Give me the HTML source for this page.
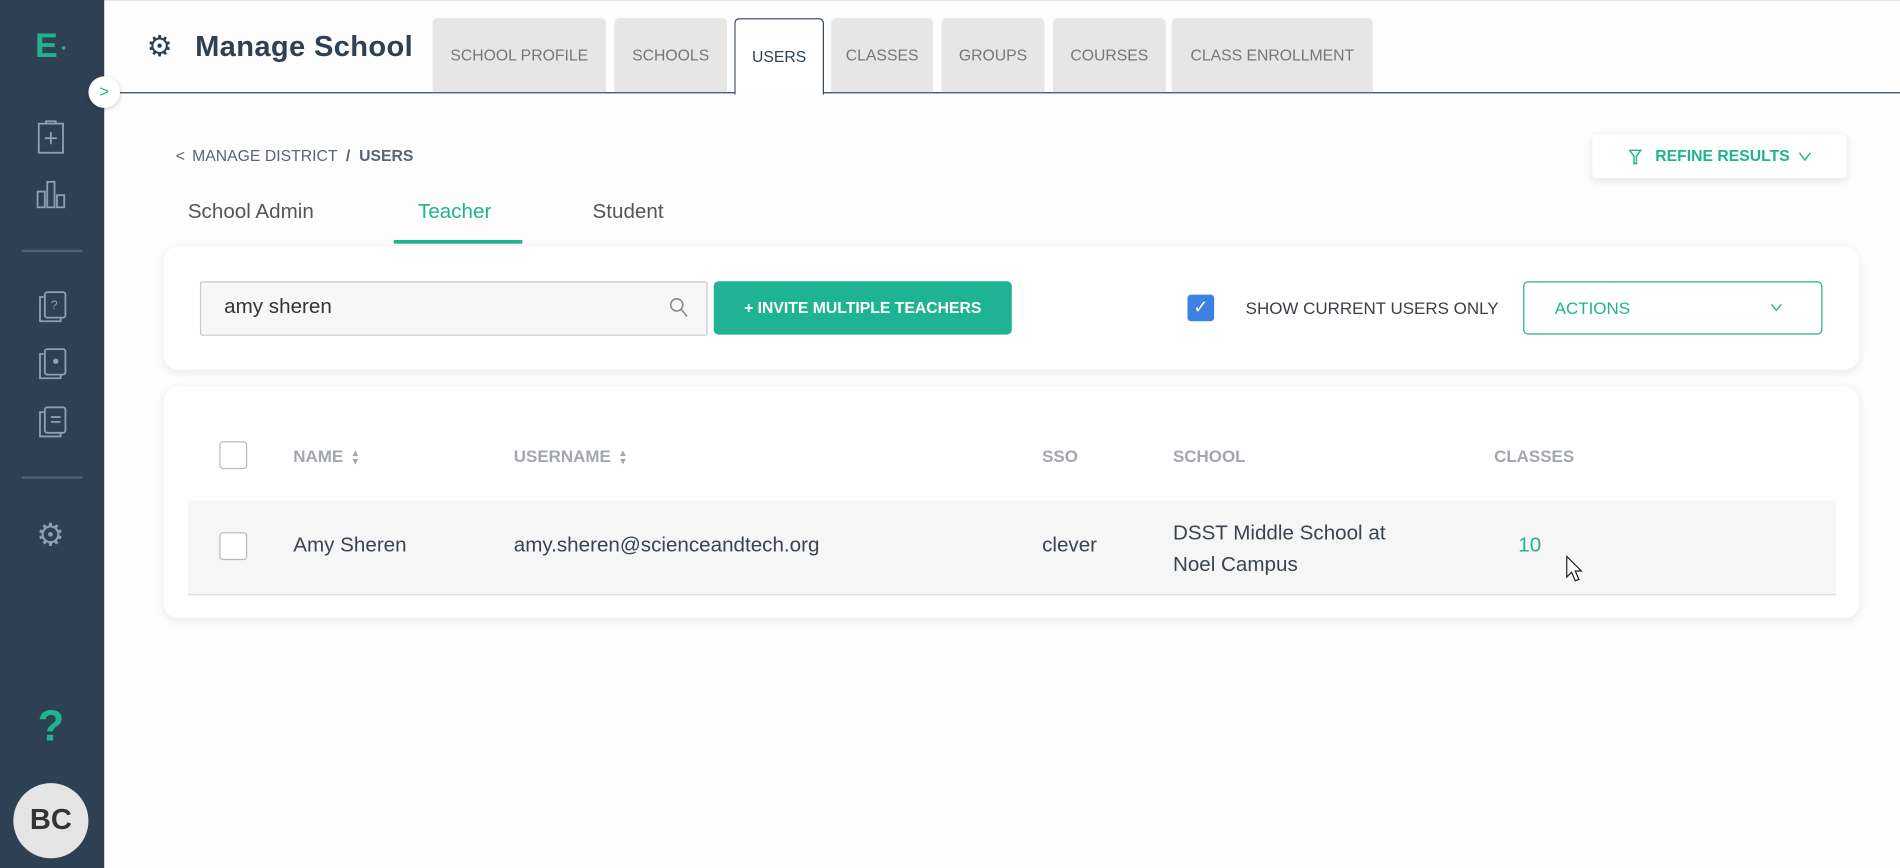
<!DOCTYPE html>
<html><head><meta charset="utf-8"><style>
html,body{margin:0;padding:0;width:1900px;height:868px;overflow:hidden;background:#fff;font-family:"Liberation Sans",sans-serif;}
#w{position:absolute;left:0;top:0;width:1568px;height:716px;transform:scale(1.21173,1.2123);transform-origin:0 0;background:#fdfdfd;}
.a{position:absolute;}
#side{left:0;top:0;width:86px;height:716px;background:#2e4053;}
.tab{position:absolute;top:15px;height:61px;background:#e6e6e6;border-radius:4px 4px 0 0;color:#777;font-size:13px;line-height:62px;text-align:center;}
.card{position:absolute;left:135px;width:1399px;background:#fff;border-radius:12px;box-shadow:0 2px 8px rgba(0,0,0,.08);}
.th{position:absolute;top:368px;font-size:14px;font-weight:bold;color:#a3a7ad;}
.td{position:absolute;font-size:17px;color:#3a4450;}
.cb{position:absolute;width:21px;height:21px;border:1px solid #bbb;border-radius:3px;background:#fff;}
.ic{position:absolute;stroke:#8aa0b4;fill:none;stroke-width:1.5;}
.sort{display:inline-block;vertical-align:middle;margin-left:6px;font-size:8px;line-height:7px;color:#a3a7ad;}
</style></head><body><div id="w">
<div class="a" style="left:86px;top:0;width:1482px;height:1px;background:#e4e4ea"></div>
<div id="side" class="a"></div>
<div class="a" style="left:29px;top:22px;font-size:28px;font-weight:bold;color:#1fb38f">E</div>
<div class="a" style="left:51px;top:38px;width:3px;height:3px;border-radius:50%;background:#1fb38f"></div>
<svg class="ic" style="left:30px;top:98px" width="24" height="30" viewBox="0 0 24 30"><rect x="2" y="4" width="20" height="24"/><path d="M8 4V2h8v2M12 11v10M7 16h10"/></svg>
<svg class="ic" style="left:30px;top:148px" width="24" height="24" viewBox="0 0 24 24"><rect x="1" y="10" width="6" height="13"/><rect x="9" y="2" width="6" height="21"/><rect x="17" y="13" width="6" height="10"/></svg>
<div class="a" style="left:18px;top:206px;width:50px;height:2px;background:#4e5f70"></div>
<svg class="ic" style="left:30px;top:239px" width="26" height="28" viewBox="0 0 26 28"><path d="M6 6H3v20h17v-3"/><rect x="7" y="2" width="17" height="21" rx="2"/><text x="12" y="16" font-size="10" fill="#8aa0b4" stroke="none" font-family="Liberation Sans">?</text></svg>
<svg class="ic" style="left:30px;top:286px" width="26" height="28" viewBox="0 0 26 28"><path d="M6 6H3v20h17v-3"/><rect x="7" y="2" width="17" height="21" rx="2"/><circle cx="16" cy="12" r="1.5" fill="#8aa0b4"/></svg>
<svg class="ic" style="left:30px;top:334px" width="26" height="28" viewBox="0 0 26 28"><path d="M6 6H3v20h17v-3"/><rect x="7" y="2" width="17" height="21" rx="2"/><path d="M12 10h8M12 14h8"/></svg>
<div class="a" style="left:18px;top:393px;width:50px;height:2px;background:#4e5f70"></div>
<div class="a" style="left:30px;top:426px;font-size:26px;color:#8aa0b4">⚙</div>
<div class="a" style="left:31px;top:578px;font-size:36px;font-weight:bold;color:#1fb38f">?</div>
<div class="a" style="left:11px;top:646px;width:62px;height:62px;border-radius:50%;background:#e4e4e4;text-align:center;line-height:62px;font-size:24px;font-weight:bold;color:#333">BC</div>
<div class="a" style="left:73px;top:63px;width:26px;height:26px;border-radius:50%;background:#fff;box-shadow:0 1px 4px rgba(0,0,0,.2);color:#1fb38f;text-align:center;line-height:24px;font-size:14px">&gt;</div>

<div class="a" style="left:99px;top:76px;width:1469px;height:1px;background:#2e4053"></div>
<div class="a" style="left:121px;top:24px;font-size:24px;color:#2e4053">⚙</div>
<div class="a" style="left:161px;top:25px;font-size:24px;font-weight:bold;color:#2e4053;letter-spacing:0.3px">Manage School</div>
<div class="tab" style="left:357px;width:143px">SCHOOL PROFILE</div>
<div class="tab" style="left:507px;width:93px">SCHOOLS</div>
<div class="tab" style="left:606px;width:72px;height:62px;background:#fff;border:1px solid #2e4053;border-bottom:none;color:#2e4053">USERS</div>
<div class="tab" style="left:686px;width:84px">CLASSES</div>
<div class="tab" style="left:777px;width:85px">GROUPS</div>
<div class="tab" style="left:869px;width:93px">COURSES</div>
<div class="tab" style="left:967px;width:166px">CLASS ENROLLMENT</div>

<div class="a" style="left:145px;top:121px;font-size:13px;color:#5a6474"><span style="margin-right:6px">&lt;</span>MANAGE DISTRICT &nbsp;<b>/</b>&nbsp; <b>USERS</b></div>
<div class="a" style="left:1314px;top:111px;width:210px;height:36px;background:#fff;border-radius:3px;box-shadow:0 2px 6px rgba(0,0,0,.1);color:#1fb38f;font-size:13px;font-weight:bold;line-height:36px"><svg style="position:absolute;left:30px;top:12px" width="11" height="13" viewBox="0 0 11 13"><path d="M1 1h9L6.5 6v6h-2V6z" fill="none" stroke="#1fb38f" stroke-width="1.2"/></svg><span style="position:absolute;left:52px">REFINE RESULTS</span><svg style="position:absolute;left:170px;top:14px" width="11" height="8" viewBox="0 0 11 8"><path d="M1 1l4.5 6L10 1" fill="none" stroke="#1fb38f" stroke-width="1.2"/></svg></div>

<div class="a" style="left:155px;top:165px;font-size:17px;color:#555">School Admin</div>
<div class="a" style="left:345px;top:165px;font-size:17px;color:#1fb38f">Teacher</div>
<div class="a" style="left:489px;top:165px;font-size:17px;color:#555">Student</div>
<div class="a" style="left:325px;top:198px;width:106px;height:3px;background:#1fb38f"></div>

<div class="card" style="top:203px;height:102px"></div>
<div class="a" style="left:165px;top:232px;width:417px;height:43px;background:#f7f7f8;border:1px solid #c8c8cc;border-radius:2px"></div>
<div class="a" style="left:185px;top:243px;font-size:17px;color:#333">amy sheren</div>
<svg class="a" style="left:552px;top:245px" width="16" height="17" viewBox="0 0 16 17"><circle cx="6.5" cy="6.5" r="5" fill="none" stroke="#888" stroke-width="1.3"/><path d="M10 10l5 6" stroke="#888" stroke-width="1.3"/></svg>
<div class="a" style="left:589px;top:232px;width:246px;height:44px;background:#1db393;border-radius:4px;color:#fff;font-size:13px;font-weight:bold;text-align:center;line-height:44px">+ INVITE MULTIPLE TEACHERS</div>
<div class="a" style="left:980px;top:243px;width:22px;height:22px;background:#3d82e0;border-radius:3px;color:#fff;font-size:15px;text-align:center;line-height:22px">✓</div>
<div class="a" style="left:1028px;top:246px;font-size:14px;color:#3a3f45">SHOW CURRENT USERS ONLY</div>
<div class="a" style="left:1257px;top:232px;width:245px;height:42px;border:1px solid #1fb38f;border-radius:4px;background:#fff;color:#1fb38f;font-size:14px;line-height:42px"><span style="margin-left:25px">ACTIONS</span><svg style="position:absolute;left:203px;top:17px" width="10" height="7" viewBox="0 0 10 7"><path d="M1 1l4 5 4-5" fill="none" stroke="#1fb38f" stroke-width="1.1"/></svg></div>

<div class="card" style="top:319px;height:191px"></div>
<div class="cb" style="left:181px;top:364px"></div>
<div class="th" style="left:242px">NAME<span class="sort">▲<br>▼</span></div>
<div class="th" style="left:424px">USERNAME<span class="sort">▲<br>▼</span></div>
<div class="th" style="left:860px">SSO</div>
<div class="th" style="left:968px">SCHOOL</div>
<div class="th" style="left:1233px">CLASSES</div>
<div class="a" style="left:155px;top:413px;width:1360px;height:77px;background:#f6f6f7;border-bottom:1px solid #dcdce0"></div>
<div class="cb" style="left:181px;top:439px"></div>
<div class="td" style="left:242px;top:440px">Amy Sheren</div>
<div class="td" style="left:424px;top:440px">amy.sheren@scienceandtech.org</div>
<div class="td" style="left:860px;top:440px">clever</div>
<div class="td" style="left:968px;top:427px;line-height:26px">DSST Middle School at<br>Noel Campus</div>
<div class="td" style="left:1253px;top:440px;color:#1fb38f">10</div>
<svg class="a" style="left:1292px;top:458px" width="16" height="24" viewBox="0 0 16 24"><path d="M1 1v17l4-4 3 7 3-1-3-7h5z" fill="#fff" stroke="#222" stroke-width="1"/></svg>
</div></body></html>
